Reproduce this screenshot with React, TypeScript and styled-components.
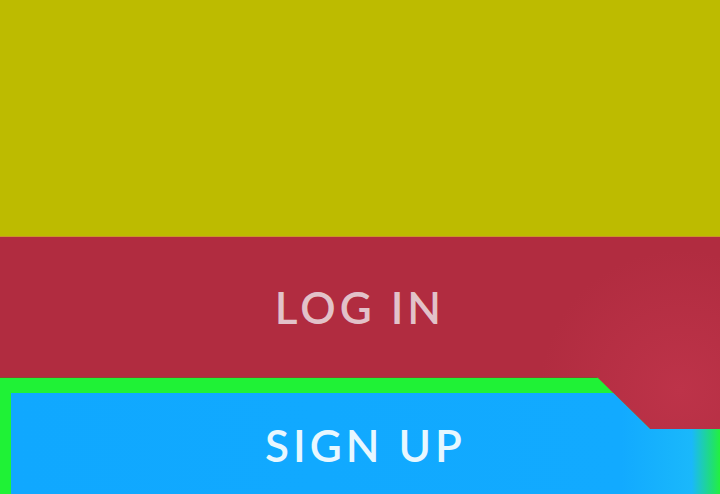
import styled, { createGlobalStyle } from "styled-components";

const GlobalStyle = createGlobalStyle`
  html, body {
    margin: 0;
    padding: 0;
    height: 100%;
    overflow: hidden;
  }
  body {
    font-family: "Lato", "Noto Sans", sans-serif;
  }
`;

const Screen = styled.div`
  width: 720px;
  height: 494px;
  display: flex;
  flex-direction: column;
  overflow: hidden;
  background: radial-gradient(circle at 680px 390px, #bd3349 0, #b12c40 140px);
`;

const Hero = styled.div`
  height: 236px;
  flex-shrink: 0;
  background: #bdbb00;
  border-bottom: 1px solid #c9962a;
`;

const LoginBand = styled.div`
  height: 140px;
  flex-shrink: 0;
  display: flex;
  align-items: center;
  justify-content: center;
`;

const Label = styled.span<{ $tone: string }>`
  font-size: 44px;
  font-weight: 600;
  letter-spacing: 4px;
  line-height: 1;
  color: ${(p) => p.$tone};
  text-transform: uppercase;
`;

const SignUpFrame = styled.div`
  flex: 1;
  padding: 15px 0 0 11px;
  background: #1ff236;
  border-top: 1px solid #8a4a30;
  clip-path: polygon(0 0, 597px 0, 650px 52px, 100% 52px, 100% 100%, 0 100%);
  display: flex;
`;

const SignUpButton = styled.div`
  flex: 1;
  display: flex;
  justify-content: center;
  padding-top: 30px;
  background: linear-gradient(
    90deg,
    #10a8ff 0,
    #12aaff 86%,
    #1ab8fb 96%,
    #20e070 99%,
    #22f040 100%
  );
`;

export default function App() {
  return (
    <>
      <GlobalStyle />
      <Screen>
        <Hero />
        <LoginBand>
          <Label $tone="#e2c2c9">Log in</Label>
        </LoginBand>
        <SignUpFrame>
          <SignUpButton>
            <Label $tone="#e8f7ff">Sign up</Label>
          </SignUpButton>
        </SignUpFrame>
      </Screen>
    </>
  );
}
